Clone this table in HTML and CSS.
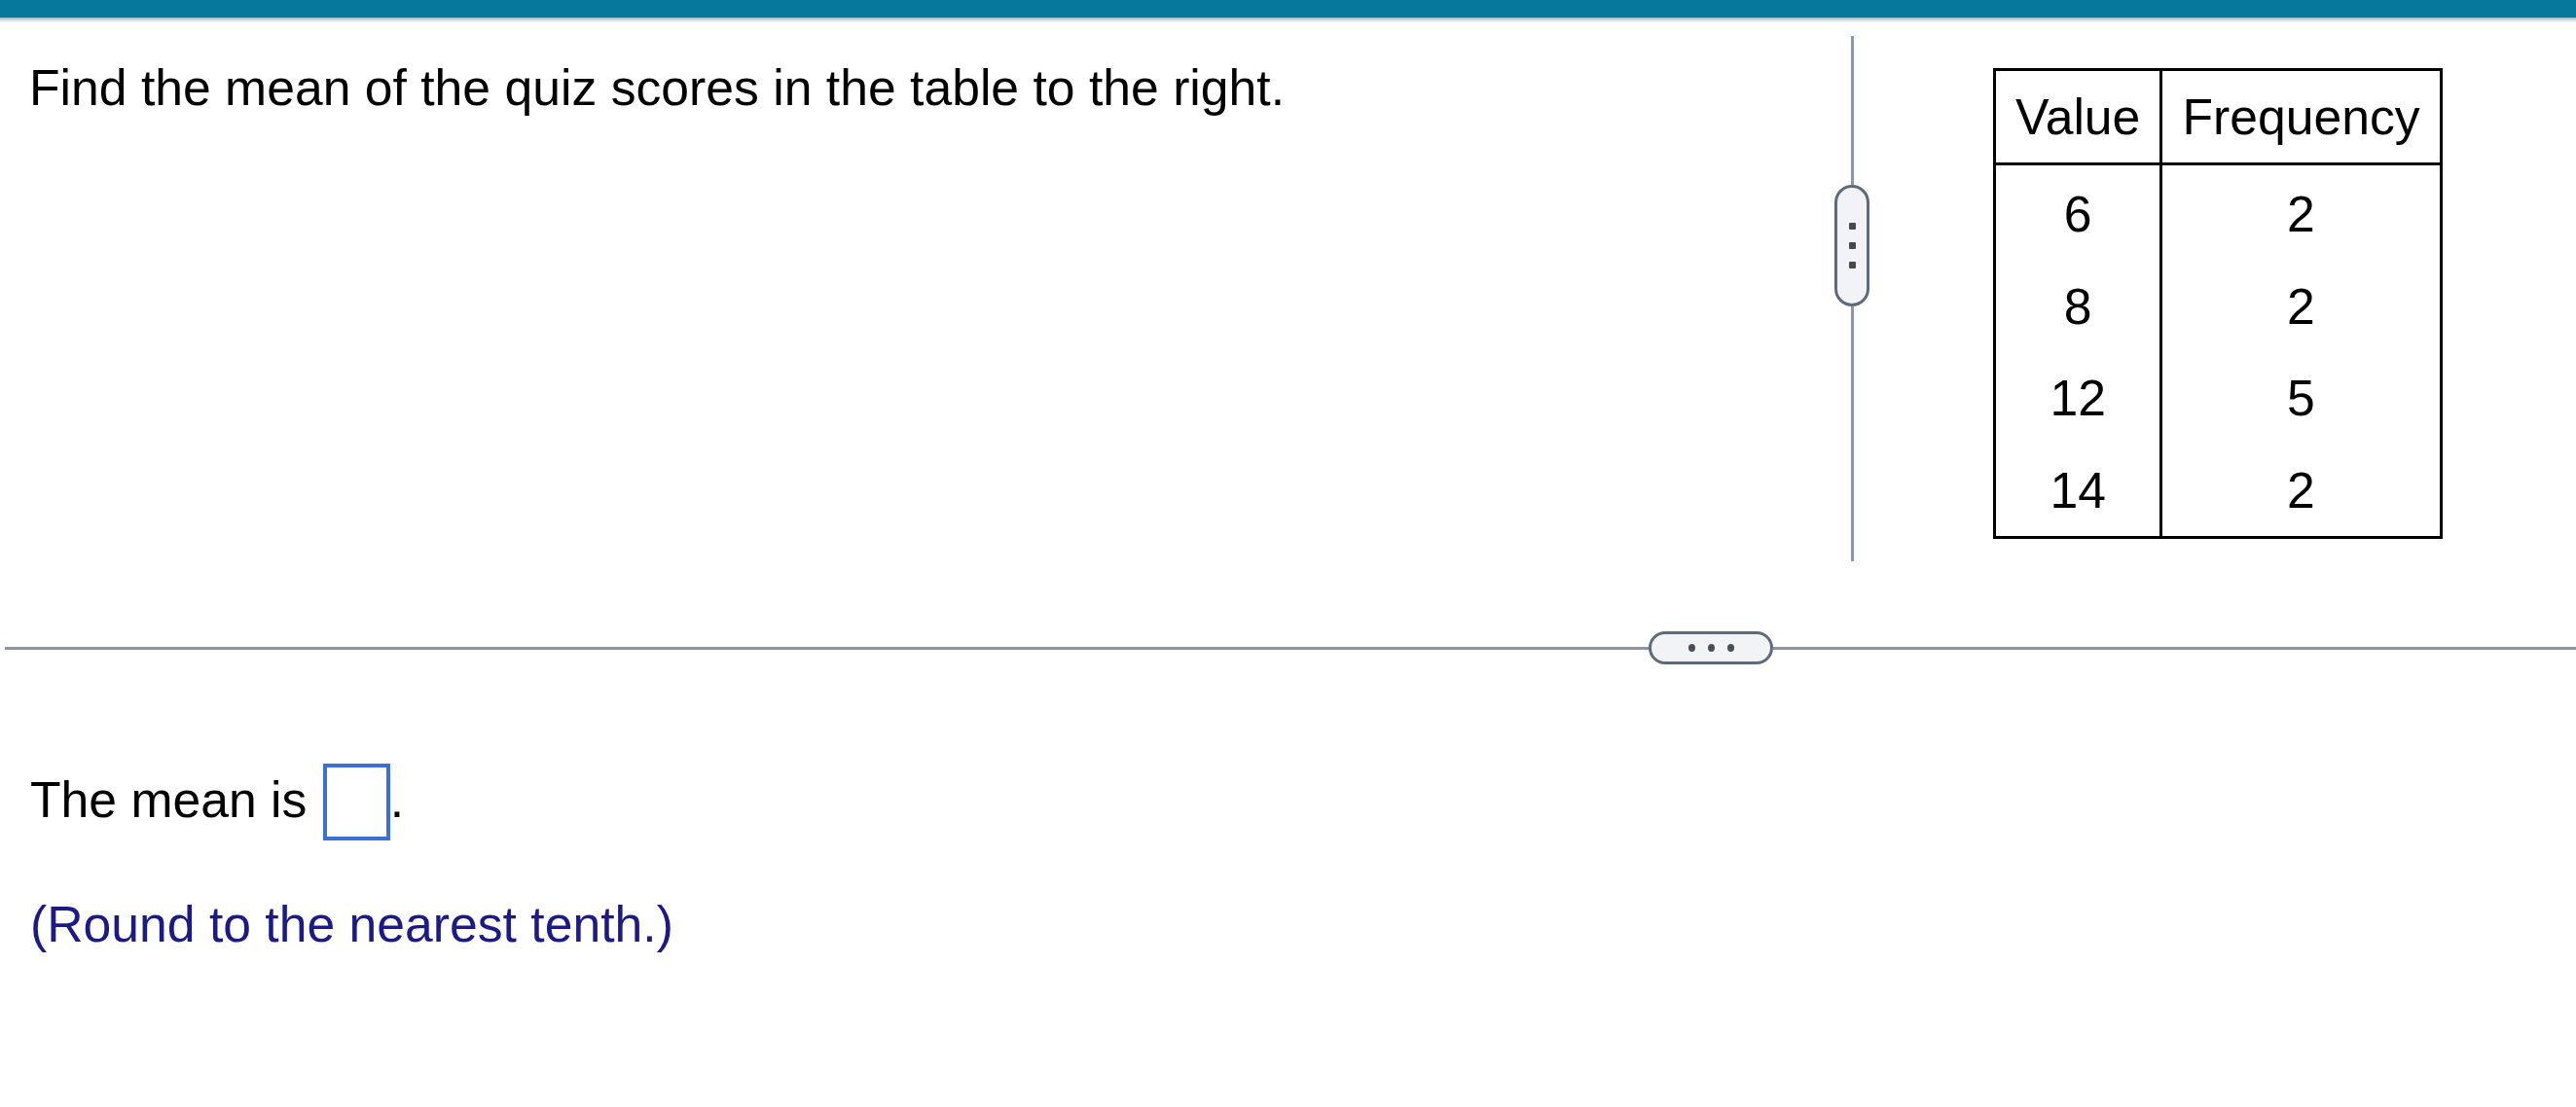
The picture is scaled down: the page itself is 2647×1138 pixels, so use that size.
FILE: index.html
```html
<!DOCTYPE html>
<html>
<head>
<meta charset="utf-8">
<link rel="stylesheet" href="styles.css">
</head>
<body>
<div class="topbar"></div>
<div class="topshade"></div>
<div class="upper">
  <div class="question">
    <p class="qtext">Find the mean of the quiz scores in the table to the right.</p>
  </div>
  <div class="vsplit">
    <div class="vline vline-top"></div>
    <div class="vpill"><span class="sq"></span><span class="sq"></span><span class="sq"></span></div>
    <div class="vline vline-bottom"></div>
  </div>
  <div class="table-pane">
    <table class="freq">
      <thead>
        <tr><th>Value</th><th>Frequency</th></tr>
      </thead>
      <tbody>
        <tr><td>6</td><td>2</td></tr>
        <tr><td>8</td><td>2</td></tr>
        <tr><td>12</td><td>5</td></tr>
        <tr><td>14</td><td>2</td></tr>
      </tbody>
    </table>
  </div>
</div>
<div class="hsplit">
  <div class="hline hline-left"></div>
  <div class="hpill"><span class="dot"></span><span class="dot"></span><span class="dot"></span></div>
  <div class="hline hline-right"></div>
</div>
<div class="answer">
  <p class="ans-line">The mean is <span class="ans-box"></span>.</p>
  <p class="hint">(Round to the nearest tenth.)</p>
</div>
</body>
</html>
```

FILE: styles.css
```css
html, body {
  margin: 0;
  padding: 0;
  background: #ffffff;
}
body {
  font-family: "Liberation Sans", Arial, Helvetica, sans-serif;
  font-size: 51.7px;
  line-height: 60px;
  color: #000;
  width: 2647px;
  overflow: hidden;
}
.topbar {
  height: 18px;
  background: #05789b;
}
.topshade {
  height: 5px;
  background: linear-gradient(to bottom, #9fb4c4, #d9e2ea 60%, #f4f6f8);
}
.upper {
  display: flex;
  height: 626px;
}
.question {
  width: 1855px;
  padding-left: 30px;
  padding-top: 37px;
}
.qtext {
  margin: 0;
}
.vsplit {
  width: 36px;
  display: flex;
  flex-direction: column;
  align-items: center;
  padding-top: 14px;
}
.vline {
  width: 3px;
  background: #8d96a8;
}
.vline-top { height: 153px; }
.vline-bottom { height: 262px; }
.vpill {
  box-sizing: border-box;
  width: 36px;
  height: 125px;
  border: 3px solid #5f6b7a;
  border-radius: 18px;
  background: #f2f3f6;
  display: flex;
  flex-direction: column;
  align-items: center;
  justify-content: center;
  gap: 13px;
}
.sq {
  width: 7px;
  height: 7px;
  border-radius: 1px;
  background: #45484d;
}
.table-pane {
  padding-left: 127px;
  padding-top: 47px;
}
.freq {
  border-collapse: collapse;
  border: 3px solid #000;
}
.freq th {
  font-weight: normal;
  height: 94px;
  padding: 0 20px;
  border-bottom: 3px solid #000;
  text-align: center;
}
.freq th:first-child, .freq td:first-child {
  border-right: 3px solid #000;
}
.freq td {
  height: 94.5px;
  padding: 0 20px;
  text-align: center;
}
.freq tbody tr:first-child td {
  padding-top: 3px;
}
.hsplit {
  display: flex;
  align-items: center;
  height: 34px;
  padding-left: 5px;
}
.hline {
  height: 3px;
  background: #8d94a5;
  box-shadow: 0 0 1px #c5cad4;
}
.hline-left { width: 1689px; }
.hline-right { flex: 1; }
.hpill {
  box-sizing: border-box;
  width: 128px;
  height: 34px;
  border: 3px solid #5f6b7a;
  border-radius: 17px;
  background: #f2f3f6;
  display: flex;
  align-items: center;
  justify-content: center;
  gap: 13px;
}
.dot {
  width: 7px;
  height: 8px;
  border-radius: 50%;
  background: #4a4f57;
}
.answer {
  padding-left: 31px;
}
.ans-line {
  margin: 102px 0 0 0;
}
.ans-box {
  display: inline-block;
  box-sizing: border-box;
  width: 69px;
  height: 79px;
  border: 4px solid #3a6fd3;
  vertical-align: -24px;
  margin-left: 2px;
}
.hint {
  margin: 56px 0 0 0;
  color: #1b1a87;
}
```
